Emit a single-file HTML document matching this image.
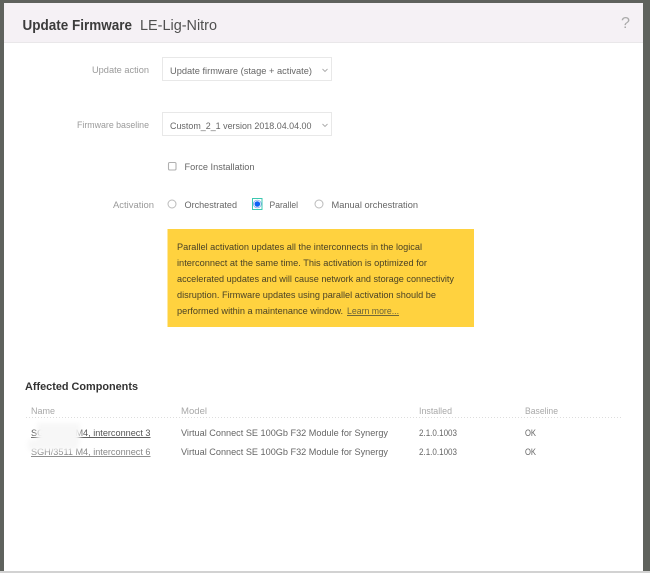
<!DOCTYPE html>
<html>
<head>
<meta charset="utf-8">
<style>
html,body{margin:0;padding:0;width:650px;height:573px;overflow:hidden;background:#5f625d}
svg{display:block;position:absolute;left:0;top:0}
text{font-family:"Liberation Sans",sans-serif;font-size:9.500px;fill:#666}
.lb{fill:#9a9a9a}
.hd{fill:#a8a8a8}
.y{fill:#4a4226}
</style>
</head>
<body>
<svg width="650" height="573" viewBox="0 0 650 573" xmlns="http://www.w3.org/2000/svg">
<defs><filter id="b" x="-30%" y="-30%" width="160%" height="160%"><feGaussianBlur stdDeviation="2.300"/></filter></defs>
<rect width="650" height="573" fill="#5f625d"/>
<rect x="4" y="3" width="639" height="568" fill="#fff"/>
<rect x="4" y="3" width="639" height="39" fill="#f5f1f5"/>
<rect x="4" y="42" width="639" height="1" fill="#e9e7e9"/>
<rect x="0" y="571" width="650" height="2" fill="#d2d2d2"/>

<text x="22.500" y="30" font-weight="bold" style="font-size:14.500px;fill:#3c3c3c" textLength="109.500" lengthAdjust="spacingAndGlyphs">Update Firmware</text>
<text x="140" y="30" style="font-size:14.500px;fill:#505050" textLength="77" lengthAdjust="spacingAndGlyphs">LE-Lig-Nitro</text>
<text x="621" y="28" style="font-size:16px;fill:#aaa" textLength="9" lengthAdjust="spacingAndGlyphs">?</text>

<text class="lb" x="92" y="73" textLength="57" lengthAdjust="spacingAndGlyphs">Update action</text>
<rect x="162.500" y="57.500" width="169" height="23" fill="#fff" stroke="#e8e8e8"/>
<text x="170" y="74" textLength="142" lengthAdjust="spacingAndGlyphs">Update firmware (stage + activate)</text>
<path d="M322.500 69l2.500 2.500 2.500-2.500" fill="none" stroke="#aaa" stroke-width=".9"/>

<text class="lb" x="77" y="128" textLength="72" lengthAdjust="spacingAndGlyphs">Firmware baseline</text>
<rect x="162.500" y="112.500" width="169" height="23" fill="#fff" stroke="#e8e8e8"/>
<text x="170" y="129" textLength="141.500" lengthAdjust="spacingAndGlyphs">Custom_2_1 version 2018.04.04.00</text>
<path d="M322.500 124l2.500 2.500 2.500-2.500" fill="none" stroke="#aaa" stroke-width=".9"/>

<rect x="168.500" y="162.500" width="7.500" height="7.500" rx="1.200" fill="#fff" stroke="#b0b0b0" stroke-width="1.100"/>
<text x="184.500" y="170" textLength="70" lengthAdjust="spacingAndGlyphs">Force Installation</text>

<text class="lb" x="113" y="208" textLength="41" lengthAdjust="spacingAndGlyphs">Activation</text>
<circle cx="172" cy="204" r="4" fill="#fff" stroke="#bbb"/>
<text x="184.500" y="208" textLength="52.500" lengthAdjust="spacingAndGlyphs">Orchestrated</text>
<rect x="252.500" y="198.500" width="9.500" height="11" fill="#fff" stroke="#3cc8b0"/>
<circle cx="257.300" cy="204" r="3.900" fill="#fff" stroke="#7fa8e4" stroke-width=".8"/>
<circle cx="257.300" cy="204" r="2.800" fill="#0d62f5"/>
<text x="269.500" y="208" textLength="28.500" lengthAdjust="spacingAndGlyphs">Parallel</text>
<circle cx="319" cy="204" r="4" fill="#fff" stroke="#bbb"/>
<text x="331.500" y="208" textLength="86.500" lengthAdjust="spacingAndGlyphs">Manual orchestration</text>

<rect x="167.500" y="229" width="306.500" height="98" fill="#ffd23f"/>
<text class="y" x="177" y="250" textLength="245" lengthAdjust="spacingAndGlyphs">Parallel activation updates all the interconnects in the logical</text>
<text class="y" x="177" y="266" textLength="250" lengthAdjust="spacingAndGlyphs">interconnect at the same time. This activation is optimized for</text>
<text class="y" x="177" y="282" textLength="277" lengthAdjust="spacingAndGlyphs">accelerated updates and will cause network and storage connectivity</text>
<text class="y" x="177" y="298" textLength="259" lengthAdjust="spacingAndGlyphs">disruption. Firmware updates using parallel activation should be</text>
<text class="y" x="177" y="314" textLength="166" lengthAdjust="spacingAndGlyphs">performed within a maintenance window.</text>
<text x="347" y="314" style="fill:#6b6238" text-decoration="underline" textLength="52" lengthAdjust="spacingAndGlyphs">Learn more...</text>

<text x="25" y="390" font-weight="bold" style="font-size:11px;fill:#333" textLength="113" lengthAdjust="spacingAndGlyphs">Affected Components</text>
<text class="hd" x="31" y="414" textLength="24" lengthAdjust="spacingAndGlyphs">Name</text>
<text class="hd" x="181" y="414" textLength="26" lengthAdjust="spacingAndGlyphs">Model</text>
<text class="hd" x="419" y="414" textLength="33" lengthAdjust="spacingAndGlyphs">Installed</text>
<text class="hd" x="525" y="414" textLength="33" lengthAdjust="spacingAndGlyphs">Baseline</text>
<line x1="26" y1="417.500" x2="623" y2="417.500" stroke="#ddd" stroke-dasharray="1 2"/>

<text x="31" y="436" text-decoration="underline" style="fill:#555" textLength="119.500" lengthAdjust="spacingAndGlyphs">SGH/3511 M4, interconnect 3</text>
<text x="181" y="436" textLength="207" lengthAdjust="spacingAndGlyphs">Virtual Connect SE 100Gb F32 Module for Synergy</text>
<text x="419" y="436" textLength="38" lengthAdjust="spacingAndGlyphs">2.1.0.1003</text>
<text x="525" y="436" textLength="11" lengthAdjust="spacingAndGlyphs">OK</text>

<text x="31" y="455" text-decoration="underline" style="fill:#888" textLength="119.500" lengthAdjust="spacingAndGlyphs">SGH/3511 M4, interconnect 6</text>
<text x="181" y="455" textLength="207" lengthAdjust="spacingAndGlyphs">Virtual Connect SE 100Gb F32 Module for Synergy</text>
<text x="419" y="455" textLength="38" lengthAdjust="spacingAndGlyphs">2.1.0.1003</text>
<text x="525" y="455" textLength="11" lengthAdjust="spacingAndGlyphs">OK</text>

<path d="M37 423h43v18l-3 9h-49v-10h9z" fill="#f7f7f7" filter="url(#b)"/>
</svg>
</body>
</html>
